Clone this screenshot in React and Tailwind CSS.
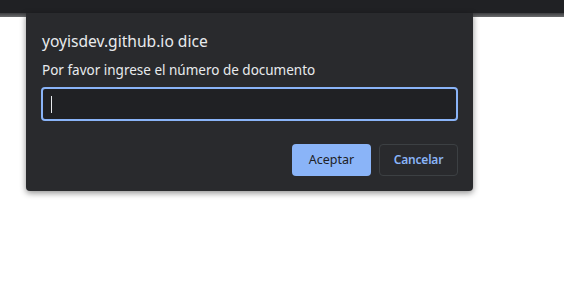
export default function App() {
  return (
    <div className="relative h-[283px] w-full overflow-hidden bg-white font-['Noto_Sans',sans-serif]">
      <div className="h-[13px] bg-[#202124]" />
      <div className="h-[4px] bg-gradient-to-b from-[#3c3d40] to-[#6b6c6e]" />

      <div className="absolute left-[26px] top-[13px] flex h-[178px] w-[447px] flex-col rounded-b-[4px] bg-[#292a2d] px-[15px] pb-[15px] pt-[18px] shadow-[0_2px_6px_rgba(0,0,0,0.45)]">
        <div className="pl-[1px] text-[15.6px] leading-[21px] text-[#e8eaed]">yoyisdev.github.io dice</div>
        <div className="mt-[9px] pl-[1px] text-[13.5px] leading-[18px] text-[#e8eaed]">
          Por favor ingrese el número de documento
        </div>
        <div className="mt-[8px] flex h-[34px] items-center rounded-[4px] border-2 border-[#8ab4f8] bg-[#202124] pl-[8px]">
          <span className="h-[17px] w-[1px] bg-[#e8eaed]" />
        </div>
        <div className="mt-auto flex justify-end gap-[8px]">
          <button className="h-[32px] w-[79px] rounded-[4px] bg-[#8ab4f8] text-[12.5px] text-[#202124]">
            Aceptar
          </button>
          <button className="h-[32px] w-[79px] rounded-[4px] border border-[#3c4043] text-[12px] font-semibold tracking-[-0.2px] text-[#8ab4f8]">
            Cancelar
          </button>
        </div>
      </div>
    </div>
  );
}
